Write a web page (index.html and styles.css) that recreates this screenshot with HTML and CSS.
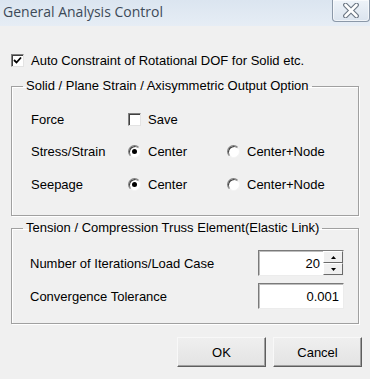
FILE: index.html
```html
<!DOCTYPE html>
<html>
<head>
<meta charset="utf-8">
<link rel="stylesheet" href="styles.css">
</head>
<body>
<div class="dialog">
  <div class="titlebar">
    <span class="title">General Analysis Control</span>
    <span class="close">
      <svg width="20" height="15" viewBox="0 0 20 15">
        <path d="M4.5 2 L15.5 13 M15.5 2 L4.5 13" stroke="#6b7683" stroke-width="4.8" stroke-linecap="round"/>
        <path d="M4.5 2 L15.5 13 M15.5 2 L4.5 13" stroke="#ffffff" stroke-width="2.6" stroke-linecap="round"/>
      </svg>
    </span>
  </div>
  <div class="content">
    <div class="toprow">
      <span class="chk checked">
        <svg width="9" height="9" viewBox="0 0 9 9"><path d="M1 4 L3.5 6.5 L8 1.5" fill="none" stroke="#000" stroke-width="1.8"/></svg>
      </span>
      <span class="lbl">Auto Constraint of Rotational DOF for Solid etc.</span>
    </div>

    <fieldset class="group g1">
      <legend>Solid / Plane Strain / Axisymmetric Output Option</legend>
      <div class="g1-body">
        <div class="row r1">
          <span class="cell c1">Force</span>
          <span class="cell c2"><span class="chk"></span><span class="lbl">Save</span></span>
        </div>
        <div class="row r2">
          <span class="cell c1">Stress/Strain</span>
          <span class="cell c2"><span class="radio on"></span><span class="lbl">Center</span></span>
          <span class="cell c3"><span class="radio"></span><span class="lbl">Center+Node</span></span>
        </div>
        <div class="row r3">
          <span class="cell c1">Seepage</span>
          <span class="cell c2"><span class="radio on"></span><span class="lbl">Center</span></span>
          <span class="cell c3"><span class="radio"></span><span class="lbl">Center+Node</span></span>
        </div>
      </div>
    </fieldset>

    <fieldset class="group g2">
      <legend>Tension / Compression Truss Element(Elastic Link)</legend>
      <div class="g2-body">
        <div class="frow">
          <span class="flabel">Number of Iterations/Load Case</span>
          <span class="edit spin">
            <span class="val">20</span>
            <span class="spinbtns">
              <span class="sb up"><svg width="5" height="3" viewBox="0 0 5 3"><path d="M0 3 L2.5 0 L5 3Z" fill="#000"/></svg></span>
              <span class="sb dn"><svg width="5" height="3" viewBox="0 0 5 3"><path d="M0 0 L2.5 3 L5 0Z" fill="#000"/></svg></span>
            </span>
          </span>
        </div>
        <div class="frow">
          <span class="flabel">Convergence Tolerance</span>
          <span class="edit"><span class="val">0.001</span></span>
        </div>
      </div>
    </fieldset>

    <div class="buttons">
      <button class="btn">OK</button>
      <button class="btn">Cancel</button>
    </div>
  </div>
</div>
</body>
</html>
```

FILE: styles.css
```css
html, body {
  margin: 0;
  padding: 0;
}
body {
  width: 370px;
  height: 379px;
  overflow: hidden;
  background: #f0f0f0;
  font-family: "Liberation Sans", Arial, sans-serif;
  font-size: 13px;
  color: #000;
}
.dialog {
  display: flex;
  flex-direction: column;
  width: 370px;
  height: 379px;
}
.titlebar {
  height: 26px;
  display: flex;
  align-items: flex-start;
  background: linear-gradient(#dbe5f0, #e6edf5);
  flex-shrink: 0;
}
.title {
  font-family: "Open Sans", "Noto Sans", sans-serif;
  font-size: 14px;
  color: #3d4a58;
  line-height: 24px;
  padding-left: 3px;
}
.close {
  margin-left: auto;
  width: 36px;
  height: 21px;
  border: 1px solid #8b98a8;
  border-top: none;
  border-radius: 0 0 4px 4px;
  background: linear-gradient(#eef3f9, #dbe4ee);
  display: flex;
  align-items: center;
  justify-content: center;
  box-shadow: inset 0 0 0 1px rgba(255,255,255,0.6);
}
.content {
  padding: 0 11px;
  display: flex;
  flex-direction: column;
}
.toprow {
  display: flex;
  align-items: center;
  height: 14px;
  margin-top: 27px;
}
.chk {
  width: 11px;
  height: 11px;
  border: 1px solid;
  border-color: #808080 #e3e3e3 #e3e3e3 #808080;
  box-shadow: inset 1px 1px 0 #404040;
  background: #fff;
  display: inline-flex;
  align-items: center;
  justify-content: center;
  flex-shrink: 0;
}
.toprow .lbl {
  margin-left: 7px;
}
.group {
  margin: 0;
  padding: 0;
  border: 1px solid #a0a0a0;
  box-shadow: 1px 1px 0 #fff, inset 1px 1px 0 #fff;
  min-width: 0;
}
.group legend {
  margin-left: 11px;
  padding: 0 3px;
  line-height: 14px;
  font-size: 13px;
}
.g1 {
  margin-top: 12px;
}
.g1-body {
  padding: 10px 0 14px 19px;
}
.row {
  display: flex;
  align-items: center;
  height: 32px;
}
.row.r3 {
  height: 34px;
}
.cell {
  display: flex;
  align-items: center;
}
.c1 {
  width: 97px;
}
.c2 {
  width: 99px;
}
.cell .lbl {
  margin-left: 7px;
}
.radio {
  width: 11px;
  height: 11px;
  border-radius: 50%;
  border: 1px solid;
  border-color: #808080 #f4f4f4 #f4f4f4 #808080;
  background: #fff;
  box-shadow: inset 1px 1px 0 #404040;
  display: inline-flex;
  align-items: center;
  justify-content: center;
  flex-shrink: 0;
}
.radio.on::after {
  content: "";
  width: 5px;
  height: 5px;
  border-radius: 50%;
  background: #000;
}
.g2 {
  margin-top: 5px;
}
.g2-body {
  padding: 15px 14px 14px 18px;
  display: flex;
  flex-direction: column;
  gap: 7px;
}
.frow {
  display: flex;
  align-items: center;
  justify-content: space-between;
  height: 26px;
}
.edit {
  width: 84px;
  height: 24px;
  border: 1px solid;
  border-color: #7a7a7a #ececec #ececec #7a7a7a;
  box-shadow: inset 1px 1px 0 #bdbdbd;
  background: #fff;
  display: flex;
  align-items: center;
  justify-content: flex-end;
  box-sizing: content-box;
}
.edit .val {
  padding-right: 4px;
}
.spin .val {
  padding-right: 3px;
}
.spinbtns {
  display: flex;
  flex-direction: column;
  width: 20px;
  height: 24px;
  align-self: stretch;
}
.sb {
  flex: 1;
  display: flex;
  align-items: center;
  justify-content: center;
  background: #f0f0f0;
  border: 1px solid;
  border-color: #fff #6a6a6a #6a6a6a #fff;
}
.buttons {
  display: flex;
  justify-content: flex-end;
  gap: 7px;
  margin-top: 13px;
  margin-right: -3px;
}
.btn {
  width: 89px;
  height: 30px;
  font-family: "Liberation Sans", Arial, sans-serif;
  font-size: 13px;
  color: #000;
  background: linear-gradient(#efefef, #e3e3e3);
  border: 1px solid;
  border-color: #f8f8f8 #5e5e5e #5e5e5e #f8f8f8;
  box-shadow: inset -1px -1px 0 #a0a0a0;
  padding: 0;
}
```
